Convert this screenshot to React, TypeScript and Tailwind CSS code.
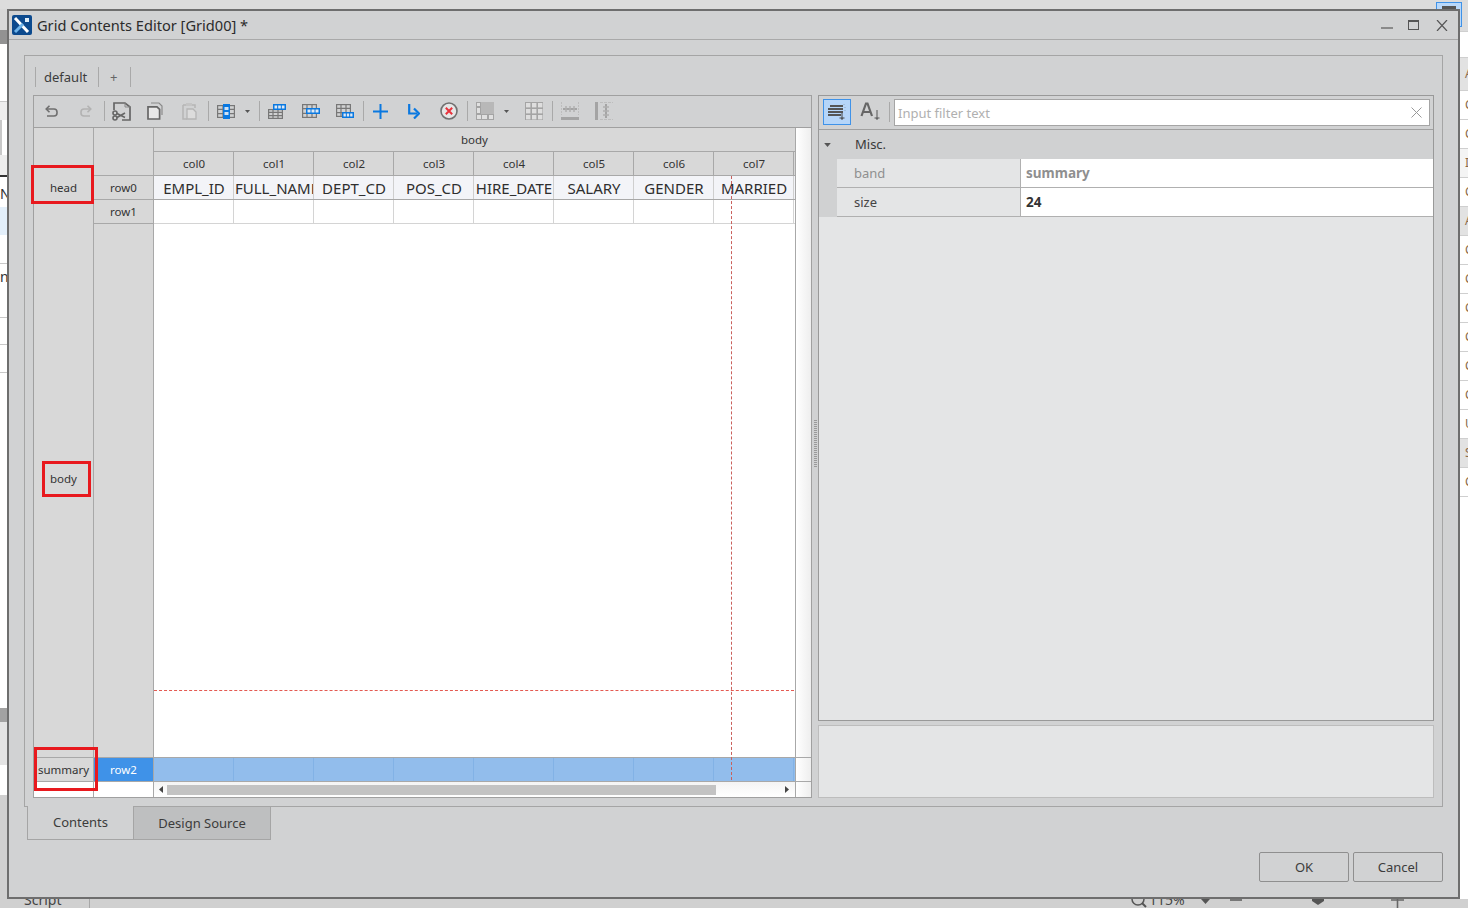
import React from "react";

const font = "font-['Noto_Sans','Open_Sans',sans-serif]";

function Sep({ className = "" }: { className?: string }) {
  return <div className={`w-px h-[20px] bg-[#a9a9a9] shrink-0 ${className}`} />;
}

function Caret({ className = "" }: { className?: string }) {
  return (
    <svg width="5" height="3" viewBox="0 0 5 3" className={`shrink-0 ${className}`}>
      <path d="M0 0h5L2.5 3z" fill="#555" />
    </svg>
  );
}

function Undo({ className = "" }: { className?: string }) {
  return (
    <svg width="13" height="13" viewBox="0 0 13 13" className={`shrink-0 ${className}`} fill="none">
      <path d="M2 4h7a3 3 0 0 1 3 3v1a3 3 0 0 1-3 3H2" stroke="#6f6f6f" strokeWidth="1.6" />
      <path d="M4.5 0.8L1.2 4l3.3 3.2" stroke="#6f6f6f" strokeWidth="1.6" />
    </svg>
  );
}

function Redo({ className = "" }: { className?: string }) {
  return (
    <svg width="12" height="13" viewBox="0 0 12 13" className={`shrink-0 ${className}`} fill="none">
      <path d="M10 4H4a3 3 0 0 0-3 3v1a3 3 0 0 0 3 3h6" stroke="#b2b2b2" strokeWidth="1.6" />
      <path d="M7.5 0.8L10.8 4 7.5 7.2" stroke="#b2b2b2" strokeWidth="1.6" />
    </svg>
  );
}

function Cut({ className = "" }: { className?: string }) {
  return (
    <svg width="19" height="19" viewBox="0 0 19 19" className={`shrink-0 ${className}`} fill="none">
      <path d="M2 8V1h11l5 4v13H10" stroke="#666" strokeWidth="1.7" />
      <path d="M13 1v4h5" stroke="#888" strokeWidth="1" />
      <circle cx="3" cy="11" r="2" stroke="#666" strokeWidth="1.6" />
      <circle cx="3" cy="16" r="2" stroke="#666" strokeWidth="1.6" />
      <path d="M5 11.5l8 4M5 15.5l8-4.5" stroke="#666" strokeWidth="1.6" />
    </svg>
  );
}

function Copy({ className = "" }: { className?: string }) {
  return (
    <svg width="16" height="18" viewBox="0 0 16 18" className={`shrink-0 ${className}`} fill="none">
      <path d="M4 1h8l3 3v9" stroke="#8a8a8a" strokeWidth="1.2" />
      <path d="M1 4.8h9l2.6 2.6V17H1z" fill="#e8e8e8" stroke="#666" strokeWidth="1.7" />
    </svg>
  );
}

function Paste({ className = "" }: { className?: string }) {
  return (
    <svg width="15" height="18" viewBox="0 0 15 18" className={`shrink-0 ${className}`} fill="none">
      <path d="M1 3h12v3M1 3v14h4" stroke="#b5b5b5" strokeWidth="1.5" />
      <path d="M4 1h6v3H4z" fill="#c4c4c4" />
      <path d="M5 7h6l3 3v7H5z" fill="#dcdcdc" stroke="#b5b5b5" strokeWidth="1.3" />
    </svg>
  );
}

function GreyGrid({ x, y, w, h }: { x: number; y: number; w: number; h: number }) {
  return (
    <g stroke="#777" strokeWidth="1.2" fill="none">
      <rect x={x + 0.6} y={y + 0.6} width={w - 1.2} height={h - 1.2} />
      <path d={`M${x} ${y + h / 3}H${x + w}M${x} ${y + (2 * h) / 3}H${x + w}M${x + w / 3} ${y}V${y + h}M${x + (2 * w) / 3} ${y}V${y + h}`} />
    </g>
  );
}

function BlueCells({ x, y, w, h }: { x: number; y: number; w: number; h: number }) {
  const c = (w - 2) / 3;
  return (
    <g>
      <rect x={x} y={y} width={w} height={h} fill="#0a78e0" />
      {[0, 1, 2].map((i) => (
        <rect key={i} x={x + 1 + i * c + 0.5} y={y + 1.5} width={c - 1} height={h - 3} fill="#dfe9f4" />
      ))}
    </g>
  );
}

function ColIcon({ className = "" }: { className?: string }) {
  return (
    <svg width="18" height="15" viewBox="0 0 18 15" className={`shrink-0 ${className}`}>
      <GreyGrid x={0} y={1} w={18} h={13} />
      <rect x="6" y="0" width="7" height="15" fill="#0a78e0" />
      <rect x="7.5" y="3" width="4" height="3" fill="#cfe2f5" />
      <rect x="7.5" y="8" width="4" height="3" fill="#cfe2f5" />
    </svg>
  );
}

function T1({ className = "" }: { className?: string }) {
  return (
    <svg width="18" height="15" viewBox="0 0 18 15" className={`shrink-0 ${className}`}>
      <GreyGrid x={0} y={5} w={15} h={10} />
      <BlueCells x={5} y={0} w={13} h={6} />
    </svg>
  );
}

function T2({ className = "" }: { className?: string }) {
  return (
    <svg width="18" height="15" viewBox="0 0 18 15" className={`shrink-0 ${className}`}>
      <GreyGrid x={0} y={0} w={15} h={14} />
      <BlueCells x={4} y={4} w={14} h={6} />
    </svg>
  );
}

function T3({ className = "" }: { className?: string }) {
  return (
    <svg width="18" height="15" viewBox="0 0 18 15" className={`shrink-0 ${className}`}>
      <GreyGrid x={0} y={0} w={15} h={13} />
      <BlueCells x={6} y={8} w={12} h={6} />
    </svg>
  );
}

function Plus({ className = "" }: { className?: string }) {
  return (
    <svg width="15" height="15" viewBox="0 0 15 15" className={`shrink-0 ${className}`}>
      <path d="M7.5 0v15M0 7.5h15" stroke="#0a78e0" strokeWidth="2" />
    </svg>
  );
}

function BlueArrow({ className = "" }: { className?: string }) {
  return (
    <svg width="12" height="15" viewBox="0 0 12 15" className={`shrink-0 ${className}`} fill="none">
      <path d="M1.2 0v9.5H9" stroke="#0a78e0" strokeWidth="2.2" />
      <path d="M6 4.5l5 5-5 5" stroke="#0a78e0" strokeWidth="2.2" />
    </svg>
  );
}

function CircleX({ className = "" }: { className?: string }) {
  return (
    <svg width="18" height="18" viewBox="0 0 18 18" className={`shrink-0 ${className}`} fill="none">
      <circle cx="9" cy="9" r="8" fill="#e6e6e6" stroke="#707070" strokeWidth="1.6" />
      <path d="M5.8 5.8l6.4 6.4M12.2 5.8l-6.4 6.4" stroke="#e8323c" strokeWidth="2" />
    </svg>
  );
}

function MergeIcon({ className = "" }: { className?: string }) {
  return (
    <svg width="18" height="18" viewBox="0 0 18 18" className={`shrink-0 ${className}`}>
      <rect width="18" height="18" fill="#a4a4a4" />
      <rect x="5" y="0" width="13" height="12" fill="#b8b8b8" />
      <rect x="1" y="1" width="3" height="3" fill="#e0e0e0" />
      <rect x="1" y="6" width="3" height="5" fill="#e0e0e0" />
      <rect x="1" y="13" width="4" height="4" fill="#e0e0e0" />
      <rect x="6" y="13" width="5" height="4" fill="#e0e0e0" />
      <rect x="13" y="13" width="4" height="4" fill="#e0e0e0" />
    </svg>
  );
}

function GridIcon({ className = "" }: { className?: string }) {
  return (
    <svg width="18" height="18" viewBox="0 0 18 18" className={`shrink-0 ${className}`}>
      <rect width="18" height="18" fill="#a4a4a4" />
      {[1, 7, 13].map((x) =>
        [1, 7, 13].map((y) => <rect key={`${x}-${y}`} x={x} y={y} width="4.4" height="4.4" fill="#dedede" />)
      )}
    </svg>
  );
}

function WidthIcon({ className = "" }: { className?: string }) {
  return (
    <svg width="18" height="18" viewBox="0 0 18 18" className={`shrink-0 ${className}`} fill="none">
      <rect x="0" y="15" width="18" height="3" fill="#a4a4a4" />
      <path d="M0.5 0v13M17.5 0v13" stroke="#bdbdbd" strokeWidth="1" strokeDasharray="2 1" />
      <path d="M2 7h14" stroke="#a4a4a4" strokeWidth="2" />
      <path d="M5 4v6M9 4v6M13 4v6" stroke="#b0b0b0" strokeWidth="1.5" />
    </svg>
  );
}

function HeightIcon({ className = "" }: { className?: string }) {
  return (
    <svg width="18" height="18" viewBox="0 0 18 18" className={`shrink-0 ${className}`} fill="none">
      <rect x="0" y="0" width="3" height="18" fill="#a4a4a4" />
      <path d="M5 0.5h13M5 17.5h13" stroke="#bdbdbd" strokeWidth="1" strokeDasharray="3 1" />
      <path d="M11 2v14" stroke="#a4a4a4" strokeWidth="2" />
      <path d="M8 5h6M8 9h6M8 13h6" stroke="#b0b0b0" strokeWidth="1.5" />
    </svg>
  );
}

function Logo() {
  return (
    <svg width="20" height="20" viewBox="0 0 20 20" className="shrink-0">
      <rect width="20" height="20" rx="2" fill="#0c4a8e" />
      <path d="M3 3l13 14" stroke="#ffffff" strokeWidth="3" />
      <path d="M3 17L11 9" stroke="#6fb4ea" strokeWidth="3" />
      <rect x="13" y="3" width="4" height="4" fill="#dfeefa" />
    </svg>
  );
}

const cols = ["col0", "col1", "col2", "col3", "col4", "col5", "col6", "col7"];
const heads = ["EMPL_ID", "FULL_NAME", "DEPT_CD", "POS_CD", "HIRE_DATE", "SALARY", "GENDER", "MARRIED"];

const rightRows = [
  { h: 23, bg: "bg-[#dcdcdc]", t: "" },
  { h: 26, bg: "bg-white", t: "" },
  { h: 33, bg: "bg-[#e2e2e2]", t: "A" },
  { h: 29, bg: "bg-white", t: "C" },
  { h: 29, bg: "bg-white", t: "C" },
  { h: 29, bg: "bg-[#f4f4f4]", t: "I" },
  { h: 29, bg: "bg-white", t: "C" },
  { h: 29, bg: "bg-[#e2e2e2]", t: "A" },
  { h: 29, bg: "bg-white", t: "C" },
  { h: 29, bg: "bg-white", t: "C" },
  { h: 29, bg: "bg-white", t: "C" },
  { h: 29, bg: "bg-white", t: "C" },
  { h: 29, bg: "bg-white", t: "C" },
  { h: 29, bg: "bg-white", t: "C" },
  { h: 29, bg: "bg-white", t: "U" },
  { h: 29, bg: "bg-[#e2e2e2]", t: "S" },
  { h: 29, bg: "bg-white", t: "C" },
];

export default function App() {
  return (
    <div className={`${font} w-[1468px] h-[908px] overflow-hidden flex flex-col bg-[#d8d8d8] text-[#333]`}>
      {/* top strip of the application behind */}
      <div className="h-[9px] shrink-0 relative bg-[#dcdcdc]">
        <div className="absolute left-[1436px] top-[2px] w-[26px] h-[25px] bg-[#b8d8fa] border border-[#3f92e8] z-0">
          <div className="mx-auto mt-[3px] w-[14px] h-[3px] bg-[#555]" />
        </div>
      </div>

      <div className="h-[890px] shrink-0 flex">
        {/* left strip */}
        <div className="w-[7px] shrink-0 flex flex-col bg-white overflow-hidden text-[14px] leading-none">
          <div className="h-[21px] bg-[#d8d8d8]" />
          <div className="h-[14px] bg-[#929292]" />
          <div className="h-[58px] bg-white border-b border-[#c8c8c8]" />
          <div className="h-[18px] bg-[#ededed]" />
          <div className="h-[35px] bg-white border-l-2 border-[#c8c8c8]" />
          <div className="h-[20px] bg-[#ededed]" />
          <div className="h-[2px] bg-[#333]" />
          <div className="h-[30px] bg-white pt-[10px] whitespace-nowrap">N</div>
          <div className="h-[28px] bg-[#e3effa]" />
          <div className="h-[29px] bg-white border-b border-[#c8c8c8]" />
          <div className="h-[54px] bg-white border-b border-[#c8c8c8] pt-[6px]">n</div>
          <div className="h-[27px] bg-white border-b border-[#c8c8c8]" />
          <div className="h-[28px] bg-white border-b border-[#c8c8c8]" />
          <div className="h-[335px] bg-white" />
          <div className="h-[14px] bg-[#a2a2a2]" />
          <div className="h-[43px] bg-[#e4e4e4]" />
          <div className="h-[30px] bg-white" />
          <div className="flex-1 bg-[#d0d0d0]" />
        </div>

        {/* dialog */}
        <div className="w-[1453px] shrink-0 border-2 border-[#6e6e6e] bg-[#d1d2d3] flex flex-col relative z-10">
          <div className="h-[29px] shrink-0 border-b border-[#a9a9a9] flex items-center pl-[3px]">
            <Logo />
            <span className="ml-[5px] pt-[2px] text-[14.6px] text-[#2b2b2b] whitespace-nowrap">Grid Contents Editor [Grid00] *</span>
            <div className="ml-auto flex items-center">
              <div className="w-[12px] h-[2px] bg-[#8a8a8a] mt-[6px]" />
              <div className="ml-[15px] w-[11px] h-[10px] border border-[#555] border-t-2" />
              <svg width="12" height="11" viewBox="0 0 12 11" className="ml-[17px] mr-[10px]">
                <path d="M1 0l10 11M11 0L1 11" stroke="#555" strokeWidth="1.2" />
              </svg>
            </div>
          </div>

          <div className="mt-[15px] ml-[15px] w-[1419px] h-[752px] shrink-0 border border-[#a5a5a5] flex flex-col">
            <div className="h-[39px] shrink-0 flex items-center pl-[10px] pt-[3px] text-[13px] text-[#3c3c3c]">
              <Sep className="h-[17px]" />
              <span className="ml-[8px] w-[54px] pt-[2px]">default</span>
              <Sep className="h-[17px]" />
              <span className="ml-[11px] w-[20px] pt-[2px] text-[13px] text-[#666]">+</span>
              <Sep className="h-[17px]" />
            </div>

            <div className="flex-1 flex pl-[8px] min-h-0">
              {/* editor */}
              <div className="w-[779px] h-[703px] shrink-0 border border-[#a0a0a0] flex flex-col">
                <div className="h-[32px] shrink-0 border-b border-[#a0a0a0] flex items-center pb-px">
                  <Undo className="ml-[11px]" />
                  <Redo className="ml-[22px]" />
                  <Sep className="ml-[12px]" />
                  <Cut className="ml-[7px]" />
                  <Copy className="ml-[16px]" />
                  <Paste className="ml-[19px]" />
                  <Sep className="ml-[11px]" />
                  <ColIcon className="ml-[8px]" />
                  <Caret className="ml-[10px]" />
                  <Sep className="ml-[9px]" />
                  <T1 className="ml-[8px]" />
                  <T2 className="ml-[16px]" />
                  <T3 className="ml-[16px]" />
                  <Sep className="ml-[9px]" />
                  <Plus className="ml-[9px]" />
                  <BlueArrow className="ml-[20px]" />
                  <CircleX className="ml-[20px]" />
                  <Sep className="ml-[9px]" />
                  <MergeIcon className="ml-[8px]" />
                  <Caret className="ml-[10px]" />
                  <GridIcon className="ml-[16px]" />
                  <Sep className="ml-[9px]" />
                  <WidthIcon className="ml-[8px]" />
                  <HeightIcon className="ml-[16px]" />
                </div>

                <div className="flex-1 flex min-h-0 text-[11.5px] text-[#333]">
                  {/* band column */}
                  <div className="w-[60px] shrink-0 flex flex-col bg-[#d8d8d8] border-r border-[#a8a8a8]">
                    <div className="h-[48px] shrink-0" />
                    <div className="h-[24px] shrink-0 flex items-center justify-center">head</div>
                    <div className="flex-1 flex items-center justify-center pt-px">body</div>
                    <div className="h-[25px] shrink-0 flex items-center justify-center pt-px border-t border-b border-[#a8a8a8]">summary</div>
                    <div className="h-[15px] shrink-0 bg-white" />
                  </div>
                  {/* row column */}
                  <div className="w-[60px] shrink-0 flex flex-col bg-[#d8d8d8] border-r border-[#a8a8a8]">
                    <div className="h-[48px] shrink-0 border-b border-[#a8a8a8]" />
                    <div className="h-[24px] shrink-0 flex items-center justify-center pt-px border-b border-[#a8a8a8]">row0</div>
                    <div className="h-[24px] shrink-0 flex items-center justify-center pt-px border-b border-[#a8a8a8]">row1</div>
                    <div className="flex-1" />
                    <div className="h-[25px] shrink-0 flex items-center justify-center pt-px bg-[#3f92e8] text-white border-t border-b border-[#a8a8a8]">row2</div>
                    <div className="h-[15px] shrink-0 bg-white" />
                  </div>
                  {/* grid body */}
                  <div className="w-[642px] shrink-0 flex flex-col border-r border-[#a8a8a8] relative">
                    <div className="h-[24px] shrink-0 bg-[#d8d8d8] border-b border-[#a8a8a8] flex items-center justify-center pt-px">body</div>
                    <div className="h-[24px] shrink-0 bg-[#d8d8d8] border-b border-[#a8a8a8] flex">
                      {cols.map((c) => (
                        <div key={c} className="w-[80px] shrink-0 border-r border-[#a8a8a8] flex items-center justify-center pt-px pl-px">{c}</div>
                      ))}
                    </div>
                    <div className="h-[24px] shrink-0 bg-[#f3f4f8] border-b border-[#a8a8a8] flex text-[15px] text-[#2e2e2e]">
                      {heads.map((c) => (
                        <div key={c} className="w-[80px] h-[23px] shrink-0 border-r border-[#cfcfcf] overflow-hidden whitespace-nowrap text-center leading-[25px] pl-px">
                          {c}
                        </div>
                      ))}
                    </div>
                    <div className="h-[24px] shrink-0 bg-white border-b border-[#d4d4d4] flex">
                      {cols.map((c) => (
                        <div key={c} className="w-[80px] shrink-0 border-r border-[#d4d4d4]" />
                      ))}
                    </div>
                    <div className="flex-1 bg-white" />
                    <div className="h-[25px] shrink-0 bg-[#92bdec] border-t border-b border-[#a8a8a8] flex">
                      {cols.map((c) => (
                        <div key={c} className="w-[80px] shrink-0 border-r border-[#82b2e6]" />
                      ))}
                    </div>
                    <div className="h-[15px] shrink-0 bg-gradient-to-b from-[#f4f4f4] to-white flex items-center">
                      <svg width="4" height="7" viewBox="0 0 4 7" className="ml-[5px]"><path d="M4 0v7L0 3.5z" fill="#444" /></svg>
                      <div className="ml-[4px] w-[549px] h-[10px] bg-[#c3c3c3]" />
                      <svg width="4" height="7" viewBox="0 0 4 7" className="ml-[69px]"><path d="M0 0v7l4-3.5z" fill="#444" /></svg>
                    </div>
                    {/* guides */}
                    <div className="absolute left-0 top-[562px] w-[640px] border-t border-dashed border-[#e45a52]" />
                    <div className="absolute left-[577px] top-[48px] h-[604px] border-l border-dashed border-[#c9605c]" />
                  </div>
                  {/* right strip */}
                  <div className="w-[15px] shrink-0 flex flex-col bg-gradient-to-r from-white to-[#eeeeee]">
                    <div className="flex-1" />
                    <div className="h-[25px] shrink-0 border-t border-b border-[#a8a8a8]" />
                    <div className="h-[15px] shrink-0" />
                  </div>
                </div>
              </div>

              {/* splitter */}
              <div className="w-[6px] shrink-0 flex items-center justify-center">
                <div className="w-[3px] h-[48px] -mt-[16px] bg-[repeating-linear-gradient(0deg,#9a9a9a_0,#9a9a9a_1px,transparent_1px,transparent_2px)]" />
              </div>

              {/* properties */}
              <div className="w-[616px] shrink-0 flex flex-col">
                <div className="h-[626px] shrink-0 border border-[#999] bg-[#e4e5e6] flex flex-col">
                  <div className="h-[34px] shrink-0 bg-[#d1d2d3] border-b border-[#a0a0a0] flex items-start pt-[3px] pl-[4px]">
                    <div className="w-[28px] h-[26px] shrink-0 bg-[#b5d5f8] border border-[#3f92e8] flex items-center justify-center">
                      <svg width="20" height="18" viewBox="0 0 20 18">
                        <path d="M3 3h13M1 6h15M1 9h15M1 12h13" stroke="#555" strokeWidth="2" />
                        <path d="M17 1v1M18 4v1M18 7v1" stroke="#8fa6bd" strokeWidth="1" />
                        <path d="M15 10v6M12.5 15h5M14 16h2" stroke="#444" strokeWidth="1" />
                      </svg>
                    </div>
                    <svg width="22" height="20" viewBox="0 0 22 20" className="ml-[9px] mt-[3px] shrink-0" fill="none">
                      <path d="M1.5 14L6 1.5h1.5L12 14M3.5 10h7" stroke="#666" strokeWidth="2.2" />
                      <path d="M17 8v9M14.5 16h5M16 17h2" stroke="#555" strokeWidth="1" />
                    </svg>
                    <Sep className="ml-[7px] mt-[3px]" />
                    <div className="ml-[4px] w-[536px] h-[27px] shrink-0 bg-white border border-[#a5a5a5] flex items-center pl-[3px] pr-[7px] text-[13px] text-[#b0b0b0]">
                      <span className="pt-[3px]">Input filter text</span>
                      <svg width="11" height="11" viewBox="0 0 11 11" className="ml-auto">
                        <path d="M0.5 0.5l10 10M10.5 0.5l-10 10" stroke="#999" strokeWidth="1" />
                      </svg>
                    </div>
                  </div>
                  <div className="h-[29px] shrink-0 bg-[#d0d1d2] flex items-center text-[13px] text-[#3a3a3a]">
                    <Caret className="ml-[5px] w-[7px] h-[4px]" />
                    <span className="ml-[24px]">Misc.</span>
                  </div>
                  <div className="h-[29px] shrink-0 flex bg-[#d0d1d2] text-[13px]">
                    <div className="w-[18px] shrink-0" />
                    <div className="w-[184px] shrink-0 bg-[#e4e5e6] border-b border-[#b0b0b0] border-r flex items-center pl-[17px] pt-px text-[#8f8f8f]">band</div>
                    <div className="flex-1 bg-white border-b border-[#b0b0b0] flex items-center pl-[5px] pt-px text-[13.5px] font-bold text-[#8f8f8f]">summary</div>
                  </div>
                  <div className="h-[29px] shrink-0 flex bg-[#d0d1d2] text-[13px]">
                    <div className="w-[18px] shrink-0" />
                    <div className="w-[184px] shrink-0 bg-[#e4e5e6] border-b border-[#b0b0b0] border-r flex items-center pl-[17px] pt-px text-[#444]">size</div>
                    <div className="flex-1 bg-white border-b border-[#b0b0b0] flex items-center pl-[5px] pt-px text-[13.5px] font-bold text-[#333]">24</div>
                  </div>
                </div>
                <div className="mt-[4px] h-[73px] shrink-0 border border-[#bdbdbd] bg-[#e4e5e6]" />
              </div>
            </div>
          </div>

          {/* tabs */}
          <div className="ml-[18px] -mt-px flex h-[34px] shrink-0 text-[13px] text-[#3c3c3c] relative">
            <div className="w-[106px] bg-[#d1d2d3] border-l border-b border-[#a5a5a5] flex items-center justify-center pt-px">Contents</div>
            <div className="w-[138px] bg-[#bebfc0] border border-[#a5a5a5] flex items-center justify-center pt-px">Design Source</div>
          </div>

          <div className="mt-[12px] mr-[15px] flex justify-end gap-[4px] text-[13px] text-[#3c3c3c]">
            <div className="w-[90px] h-[30px] border border-[#8f8f8f] rounded-[2px] flex items-center justify-center pt-px">OK</div>
            <div className="w-[90px] h-[30px] border border-[#8f8f8f] rounded-[2px] flex items-center justify-center pt-px">Cancel</div>
          </div>

          {/* red annotations */}
          <div className="absolute left-[22px] top-[154px] w-[63px] h-[39px] border-[3px] border-[#e8191e]" />
          <div className="absolute left-[33px] top-[450px] w-[49px] h-[36px] border-[3px] border-[#e8191e]" />
          <div className="absolute left-[25px] top-[736px] w-[64px] h-[44px] border-[3px] border-[#e8191e]" />
        </div>

        {/* right strip */}
        <div className="w-[8px] shrink-0 flex flex-col bg-white overflow-hidden text-[12px] text-[#8a6a4a] leading-none">
          {rightRows.map((r, i) => (
            <div key={i} style={{ height: r.h }} className={`${r.bg} shrink-0 border-b border-[#cfcfcf] flex items-center pl-[5px] whitespace-nowrap`}>
              {r.t}
            </div>
          ))}
        </div>
      </div>

      {/* bottom strip */}
      <div className="flex-1 bg-[#d0d0d0] flex items-start overflow-hidden text-[14px] text-[#444] leading-none">
        <span className="ml-[24px] w-[65px] -mt-[6px] whitespace-nowrap">Script</span>
        <div className="w-px h-[9px] bg-[#a8a8a8]" />
        <svg width="16" height="9" viewBox="0 0 16 9" className="ml-[1041px]">
          <circle cx="7" cy="0" r="6" fill="none" stroke="#555" strokeWidth="1.5" />
          <path d="M11 4l4 4" stroke="#555" strokeWidth="2" />
        </svg>
        <span className="ml-[2px] w-[49px] -mt-[6px] whitespace-nowrap">115%</span>
        <svg width="9" height="5" viewBox="0 0 9 5" className="ml-[3px]"><path d="M0 0h9L4.5 5z" fill="#555" /></svg>
        <div className="ml-[20px] w-[12px] h-[2px] bg-[#777]" />
        <svg width="12" height="6" viewBox="0 0 12 6" className="ml-[70px]"><path d="M0 0h12v2L6 6 0 2z" fill="#555" /></svg>
        <svg width="13" height="9" viewBox="0 0 13 9" className="ml-[67px]"><path d="M0 1h13M6.5 0v9" stroke="#666" strokeWidth="1.6" /></svg>
      </div>
    </div>
  );
}
